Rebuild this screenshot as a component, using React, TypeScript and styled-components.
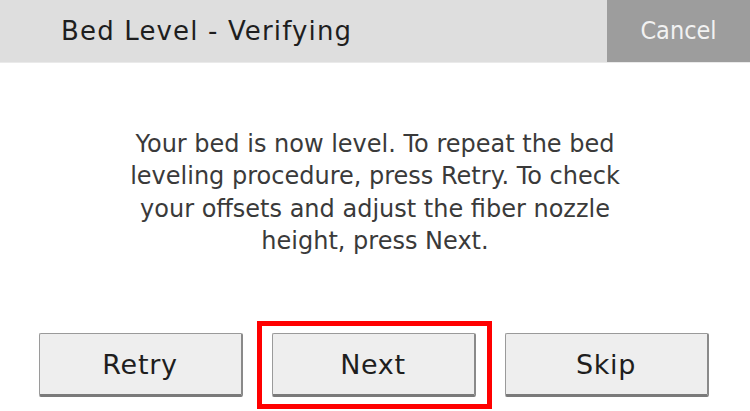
import React from 'react';
import styled, { createGlobalStyle } from 'styled-components';

const GlobalStyle = createGlobalStyle`
	html, body {
		margin: 0;
		padding: 0;
		background: #ffffff;
	}
	body {
		font-family: 'DejaVu Sans', Verdana, sans-serif;
	}
`;

const Screen = styled.div`
	width: 750px;
	height: 411px;
	display: flex;
	flex-direction: column;
	background: #ffffff;
	overflow: hidden;
`;

const Header = styled.div`
	height: 62px;
	display: flex;
	align-items: stretch;
	background: #dedede;
	border-bottom: 1px solid #eaeaea;
`;

const Title = styled.div`
	flex: 1;
	display: flex;
	align-items: center;
	padding-left: 61px;
	padding-bottom: 1px;
	font-family: 'DejaVu Sans', sans-serif;
	font-size: 26px;
	letter-spacing: 1.15px;
	color: #1e1e1e;
`;

const CancelButton = styled.button`
	width: 143px;
	border: none;
	background: #9d9d9d;
	color: #f2f2f2;
	font-family: 'DejaVu Sans Condensed', 'DejaVu Sans', sans-serif;
	font-weight: 300;
	font-size: 25px;
	padding: 0 0 2px;
	cursor: pointer;
`;

const Body = styled.div`
	flex: 1;
	display: flex;
	flex-direction: column;
	justify-content: space-between;
	padding: 65px 0 14px;
`;

const Message = styled.p`
	margin: 0;
	text-align: center;
	font-family: 'DejaVu Sans', sans-serif;
	font-weight: 400;
	font-size: 24px;
	line-height: 32.4px;
	color: #3a3a3a;
`;

const ButtonRow = styled.div`
	display: flex;
	justify-content: center;
	gap: 29px;
	padding-right: 3px;
`;

const Highlight = styled.div<{ $active?: boolean }>`
	position: relative;
	&::after {
		content: '';
		display: ${({ $active }) => ($active ? 'block' : 'none')};
		position: absolute;
		top: -12px;
		bottom: -12px;
		left: -15px;
		right: -16px;
		border: 5px solid #ff0000;
		pointer-events: none;
	}
`;

const ActionButton = styled.button`
	width: 204px;
	height: 64px;
	box-sizing: border-box;
	background: #eeeeee;
	border: 1px solid #9a9a9a;
	border-bottom: 3px solid #7a7a7a;
	border-right: 2px solid #8a8a8a;
	border-radius: 2px;
	font-family: 'DejaVu Sans', sans-serif;
	font-size: 27px;
	letter-spacing: 0.7px;
	color: #1e1e1e;
	padding: 0;
	cursor: pointer;
`;

const buttons = [
	{ label: 'Retry', active: false },
	{ label: 'Next', active: true },
	{ label: 'Skip', active: false }
];

export default function App() {
	return (
		<Screen>
			<GlobalStyle />
			<Header>
				<Title>Bed Level - Verifying</Title>
				<CancelButton>Cancel</CancelButton>
			</Header>
			<Body>
				<Message>
					Your bed is now level. To repeat the bed
					<br />
					leveling procedure, press Retry. To check
					<br />
					your offsets and adjust the fiber nozzle
					<br />
					height, press Next.
				</Message>
				<ButtonRow>
					{buttons.map((b) => (
						<Highlight key={b.label} $active={b.active}>
							<ActionButton>{b.label}</ActionButton>
						</Highlight>
					))}
				</ButtonRow>
			</Body>
		</Screen>
	);
}
